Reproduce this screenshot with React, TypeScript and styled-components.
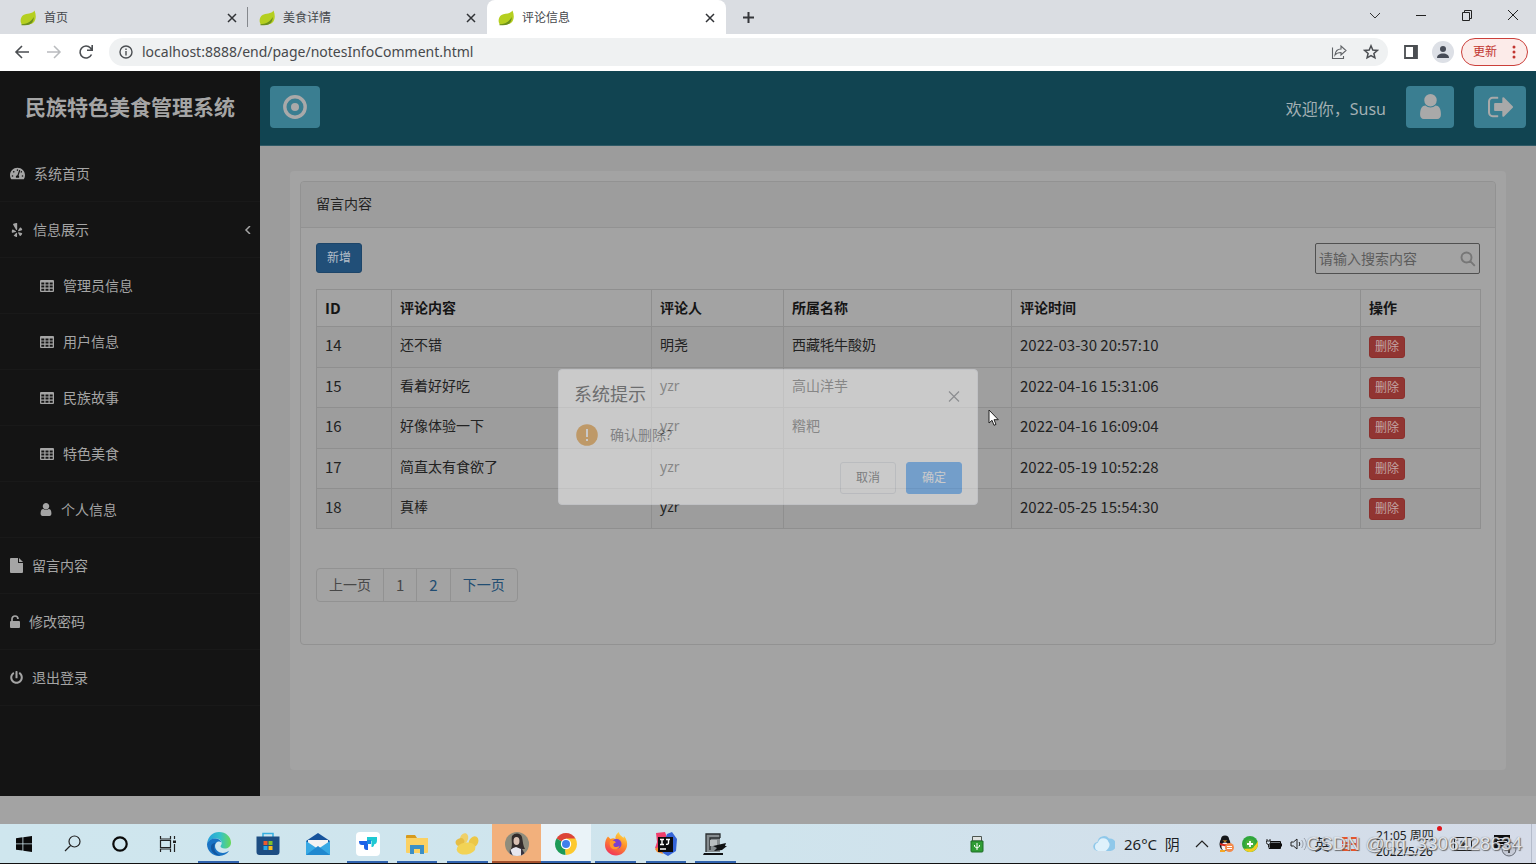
import React from 'react';
import styled, { createGlobalStyle, css } from 'styled-components';
import { FaTachometerAlt, FaYelp, FaPowerOff } from 'react-icons/fa';

const GlobalStyle = createGlobalStyle`
  *, *::before, *::after { box-sizing: border-box; }
  body {
    margin: 0;
    font-family: "Noto Sans", "Noto Sans CJK SC", sans-serif;
    font-size: 14px;
    line-height: 20px;
    color: #222;
    background: #a3a3a3;
  }
  button, input { font: inherit; color: inherit; margin: 0; }
  button { padding: 0; border: 0; background: none; cursor: default; }
  a { color: inherit; text-decoration: none; }
  svg { display: block; flex: none; }
`;

const Page = styled.div`
  display: flex;
  flex-direction: column;
  min-height: 100vh;
`;

/* ---------- browser chrome ---------- */

const TabStrip = styled.div`
  display: flex;
  height: 34px;
  padding-left: 9px;
  background: #dadde2;
`;

const Tab = styled.div<{ $active?: boolean; $divided?: boolean }>`
  display: flex;
  align-items: center;
  flex: 0 1 239px;
  padding: 1px 9px 0 11px;
  font-size: 12px;
  color: #45474b;
  ${p => p.$divided && css`
    background: linear-gradient(#85888d, #85888d) right center / 1px 20px no-repeat;
  `}
  ${p => p.$active && css`background: #fff; border-radius: 8px 8px 0 0;`}
`;

const TabTitle = styled.button`
  flex: 1;
  padding: 1px 0 0 8px;
  text-align: left;
`;

const SmallButton = styled.button<{ $w?: number }>`
  display: flex;
  align-items: center;
  justify-content: center;
  flex: none;
  width: ${p => p.$w ?? 16}px;
`;

const WindowButtons = styled.div`
  display: flex;
  margin-left: auto;
  padding-bottom: 4px;
`;

const AddressRow = styled.div`
  display: flex;
  align-items: center;
  height: 37px;
  padding: 0 8px 1px 6px;
  background: #fff;
`;

const UrlBar = styled.div`
  display: flex;
  align-items: center;
  flex: 1;
  height: 28px;
  margin: 0 7px;
  padding: 0 1px 0 10px;
  border-radius: 14px;
  background: #eff1f2;
`;

const UrlInput = styled.input`
  flex: 1;
  min-width: 0;
  padding: 0 0 0 9px;
  border: 0;
  outline: 0;
  background: none;
  color: #47494c;
`;

const Avatar = styled.span`
  display: flex;
  align-items: center;
  justify-content: center;
  width: 22px;
  height: 22px;
  border-radius: 50%;
  background: #dde0e6;
`;

const UpdateButton = styled.button`
  display: flex;
  align-items: center;
  justify-content: space-between;
  width: 67px;
  height: 28px;
  margin-left: 2px;
  padding: 0 11px;
  border: 1px solid #cb3f3a;
  border-radius: 14px;
  background: #fcebe9;
  color: #c13530;
  font-size: 12px;
`;

/* ---------- application ---------- */

const Viewport = styled.div`
  position: relative;
  display: flex;
  flex: 1;
  padding-bottom: 28px;
  background: #a3a3a3;
`;

const Sidebar = styled.aside`
  flex: 0 0 260px;
  background: #141414;
  color: #a5a5a5;
`;

const Brand = styled.h1`
  display: flex;
  align-items: center;
  justify-content: center;
  height: 75px;
  margin: 0;
  padding-bottom: 4px;
  font-size: 21px;
  font-weight: 700;
`;

const NavLink = styled.a<{ $nested?: boolean }>`
  display: flex;
  align-items: center;
  height: 56px;
  gap: 9px;
  padding: 0 8px 0 ${p => (p.$nested ? 40 : 10)}px;
  border-bottom: 1px solid #191919;
`;

const Push = styled.span`
  margin-left: auto;
`;

const Main = styled.div`
  display: flex;
  flex-direction: column;
  flex: 1;
  min-width: 0;
  background: #9c9c9c;
`;

const Header = styled.header`
  display: flex;
  align-items: center;
  height: 75px;
  gap: 20px;
  padding: 0 10px 3px;
  border-bottom: 1px solid #2f5a66;
  background: #114451;
`;

const HeaderButton = styled.button<{ $w: number }>`
  display: flex;
  align-items: center;
  justify-content: center;
  width: ${p => p.$w}px;
  height: 42px;
  border-radius: 4px;
  background: #3a7e91;
  color: #a9a9a9;
`;

const Welcome = styled.span`
  margin-left: auto;
  padding-top: 4px;
  font-size: 16px;
  color: #a3b0b4;
`;

const Sheet = styled.main`
  flex: 1;
  margin: 25px 30px 26px;
  padding: 10px;
  border-radius: 4px;
  background: #a3a3a3;
`;

const Panel = styled.section`
  border: 1px solid #929292;
  border-radius: 4px;
`;

const PanelTitle = styled.h2`
  margin: 0;
  padding: 12px 15px 13px;
  border-bottom: 1px solid #929292;
  border-radius: 4px 4px 0 0;
  background: #9d9d9d;
  font-size: 14px;
  font-weight: 400;
`;

const PanelBody = styled.div`
  padding: 15px 15px 42px;
`;

const Tools = styled.div`
  display: flex;
  align-items: flex-start;
  justify-content: space-between;
  margin-bottom: 15px;
`;

const ActionButton = styled.button<{ $kind: 'add' | 'delete' }>`
  display: block;
  border: 1px solid;
  border-radius: 3px;
  font-size: 12px;
  ${p => p.$kind === 'add'
    ? css`width: 46px; height: 30px; background: #214f78; border-color: #1d4569; color: #b4bec8;`
    : css`width: 36px; height: 22px; margin-top: 1px; line-height: 20px; background: #913532; border-color: #8b2f2c; color: #c3a5a4;`}
`;

const SearchBox = styled.label`
  display: flex;
  align-items: center;
  width: 165px;
  height: 31px;
  padding: 0 3px;
  border: 1px solid #505050;
  border-radius: 2px;
  color: #777;
`;

const SearchInput = styled.input`
  flex: 1;
  min-width: 0;
  padding: 0;
  border: 0;
  outline: 0;
  background: none;
  &::placeholder { color: #5c5c5c; opacity: 1; }
`;

const Table = styled.table`
  width: 100%;
  margin-bottom: 39px;
  border-collapse: collapse;
  table-layout: fixed;
  th, td {
    padding: 8px 8px 0;
    border: 1px solid #8f8f8f;
    text-align: left;
    vertical-align: top;
  }
  thead tr { height: 37px; }
  tbody tr { height: 40px; background: #9f9f9f; }
  tbody tr:nth-child(odd) { background: #9d9d9d; }
  tbody tr:nth-child(odd):not(:last-child) { height: 41px; }
  th { color: #151515; }
`;

const Latin = styled.span`
  font-family: "Noto Sans CJK SC", sans-serif;
  font-size: 15px;
`;

const Pager = styled.nav`
  display: inline-flex;
  border: 1px solid #929292;
  border-radius: 4px;
`;

const PageButton = styled.button<{ $link?: boolean }>`
  height: 32px;
  padding: 0 12px;
  color: ${p => (p.$link ? '#214d72' : '#484848')};
  & + & { border-left: 1px solid #929292; }
`;

/* ---------- message box ---------- */

const Overlay = styled.div`
  position: absolute;
  inset: 0;
  display: flex;
  align-items: center;
  justify-content: center;
  padding-bottom: 22px;
`;

const MessageBox = styled.div`
  width: 420px;
  padding-bottom: 10px;
  border: 1px solid #ebeef5;
  border-radius: 4px;
  background: #fff;
  opacity: 0.45;
`;

const BoxHeader = styled.div`
  display: flex;
  align-items: center;
  justify-content: space-between;
  padding: 15px 15px 10px;
  line-height: 18px;
  font-size: 18px;
  color: #303133;
`;

const BoxContent = styled.div`
  display: flex;
  align-items: center;
  gap: 12px;
  padding: 10px 15px;
  line-height: 24px;
  color: #606266;
`;

const BoxFooter = styled.div`
  display: flex;
  justify-content: flex-end;
  gap: 10px;
  padding: 5px 15px 0;
`;

const BoxButton = styled.button<{ $primary?: boolean }>`
  width: 56px;
  height: 32px;
  border: 1px solid ${p => (p.$primary ? '#409eff' : '#dcdfe6')};
  border-radius: 3px;
  background: ${p => (p.$primary ? '#409eff' : '#fff')};
  color: ${p => (p.$primary ? '#fff' : '#505256')};
  font-size: 12px;
`;

const Cursor = styled.svg`
  position: absolute;
  left: 988px;
  top: 338px;
`;

/* ---------- taskbar ---------- */

const Taskbar = styled.footer`
  position: relative;
  display: flex;
  height: 40px;
  border-bottom: 1px solid #111;
  background: linear-gradient(90deg, #cfe6ee 0%, #cfe4ed 50%, #d5dbe8 100%);
  color: #1c1f24;
`;

const TaskButton = styled.button<{ $w?: number }>`
  display: flex;
  align-items: center;
  justify-content: center;
  width: ${p => p.$w ?? 48}px;
`;

const Apps = styled.div`
  display: flex;
  flex: 0 1 546px;
  margin-left: 2px;
`;

const AppButton = styled.button<{ $tint?: string; $line?: string }>`
  display: flex;
  align-items: center;
  justify-content: center;
  flex: 1;
  background: ${p => p.$tint ?? 'none'};
  ${p => p.$line && css`
    background: linear-gradient(${p.$line}, ${p.$line}) bottom / ${p.$tint ? '100%' : '82%'} 2px no-repeat ${p.$tint ?? 'transparent'};
  `}
`;

const Tray = styled.div`
  display: flex;
  align-items: stretch;
  margin-left: auto;
`;

const Weather = styled.button`
  display: flex;
  align-items: center;
  gap: 9px;
  width: 97px;
  margin-left: 104px;
  font-size: 15px;
  white-space: pre;
`;

const Ime = styled.button`
  width: 24px;
  font-size: 15px;
`;

const Clock = styled.time`
  display: flex;
  flex-direction: column;
  justify-content: center;
  width: 81px;
  padding-left: 10px;
  font-size: 12px;
  line-height: 16px;
  white-space: nowrap;
`;

const ShowDesktop = styled.button`
  width: 5px;
  margin-left: 4px;
  border-left: 1px solid #b5bccb;
`;

const RedDot = styled.i`
  position: absolute;
  right: 94px;
  top: 2px;
  width: 5px;
  height: 5px;
  border-radius: 50%;
  background: #e0151b;
`;

const Watermark = styled.span`
  position: absolute;
  right: 14px;
  top: 9px;
  font-family: "Liberation Sans", sans-serif;
  font-size: 19px;
  line-height: 22px;
  color: #e4e6ea;
  text-shadow: 1px 1px 1px #555, 0 0 1px #777;
  opacity: 0.85;
`;

/* ---------- icons ---------- */

type StrokeProps = { size: number; d: string; w?: number; color?: string };
const Stroke = ({ size, d, w = 1, color = 'currentColor' }: StrokeProps) => (
  <svg width={size} height={size} viewBox={`0 0 ${size} ${size}`} fill="none" stroke={color} strokeWidth={w}>
    <path d={d} />
  </svg>
);

const Leaf = () => (
  <svg width="16" height="16" viewBox="0 0 16 16">
    <path d="M14.500 0.500c1.800 4.500 2 9.500-1.500 12.500C10 15.200 5 14.200 2 14.800-.2 12 .2 7 3.500 5 6.500 3.200 12.500 4.200 14.500.5z" fill="#b5cf20" />
    <path d="M1.500 14.200c5-.2 9.500-2 12.300-7.200C13.800 12 11 14.500 7.500 15c-2.500.3-4.500.4-6 .3z" fill="#6c8f1c" />
  </svg>
);

const UserGlyph = ({ size }: { size: number }) => (
  <svg width={Math.round(size * 0.9)} height={size} viewBox="0 128 1280 1536" fill="currentColor">
    <path d="M1280 1399q0 109-62.500 187t-150.500 78h-854q-88 0-150.500-78t-62.500-187q0-85 8.500-160.500t31.500-152 58.500-131 94-89 134.500-34.500q131 128 313 128t313-128q76 0 134.500 34.500t94 89 58.500 131 31.500 152 8.500 160.500zM1024 512q0 159-112.500 271.500t-271.500 112.500-271.500-112.500-112.500-271.500 112.500-271.500 271.500-112.500 271.500 112.500 112.500 271.500z" />
  </svg>
);

const SignOutGlyph = () => (
  <svg width="25" height="22" viewBox="0 256 1568 1280" fill="currentColor">
    <path d="M640 1440q0 4 1 20t.5 26.500-3 23.500-10 19.500-20.500 6.500h-320q-119 0-203.500-84.500t-84.500-203.500v-704q0-119 84.500-203.500t203.500-84.500h320q13 0 22.500 9.500t9.500 22.500q0 4 1 20t.5 26.500-3 23.500-10 19.500-20.500 6.500h-320q-66 0-113 47t-47 113v704q0 66 47 113t113 47h312l11.500 1 11.500 3 8 5.500 7 9 2 13.500zM1568 896q0 26-19 45l-544 544q-19 19-45 19t-45-19-19-45v-288h-448q-26 0-45-19t-19-45v-384q0-26 19-45t45-19h448v-288q0-26 19-45t45-19 45 19l544 544q19 19 19 45z" />
  </svg>
);

const TableGlyph = () => (
  <svg width="14" height="12" viewBox="0 0 14 12">
    <path fill="currentColor" fillRule="evenodd" d="M1 0h12a1 1 0 0 1 1 1v10a1 1 0 0 1-1 1H1a1 1 0 0 1-1-1V1a1 1 0 0 1 1-1zM1.300 2.500v2h3v-2zM5.500 2.500v2h3v-2zM9.700 2.500v2h3v-2zM1.300 5.500v2h3v-2zM5.500 5.500v2h3v-2zM9.700 5.500v2h3v-2zM1.300 8.700v2h3v-2zM5.500 8.700v2h3v-2zM9.700 8.700v2h3v-2z" />
  </svg>
);

const FileGlyph = () => (
  <svg width="13" height="15" viewBox="0 0 13 15">
    <path fill="currentColor" d="M1 0h7v4.500a.5.5 0 0 0 .5.5H13v9a1 1 0 0 1-1 1H1a1 1 0 0 1-1-1V1a1 1 0 0 1 1-1zM9 0l4 4H9z" />
  </svg>
);

const UnlockGlyph = () => (
  <svg width="10" height="13" viewBox="0 0 10 13">
    <path d="M2 7V4a3 3 0 0 1 6 0" fill="none" stroke="currentColor" strokeWidth="1.700" />
    <rect y="6" width="10" height="7" rx="1" fill="currentColor" />
  </svg>
);

const WindowsLogo = () => (
  <svg width="16" height="16" viewBox="0 0 16 16" fill="#0a0a0a">
    <path d="M0 2.200 6.500 1.300v6.200H0zM7.300 1.200 16 0v7.500H7.300zM0 8.300h6.500v6.300L0 13.700zM7.300 8.300H16V16l-8.700-1.300z" />
  </svg>
);

const TaskViewGlyph = () => (
  <svg width="18" height="16" viewBox="0 0 18 16" fill="none" stroke="#222" strokeWidth="1.200">
    <path d="M1.500 0v3h10V0M1.500 16v-3h10v3M1.500 4.500h10v7h-10zM15.500 0v3M15.500 8v8" />
    <path d="M14 4.500h3v2.500h-3z" fill="#222" stroke="none" />
  </svg>
);

const EdgeLogo = () => (
  <svg width="24" height="24" viewBox="0 0 24 24">
    <defs>
      <linearGradient id="edgeTop" x1="0" y1="0.500" x2="1" y2="0.500">
        <stop offset="0" stopColor="#249fdc" />
        <stop offset="0.550" stopColor="#35c1c9" />
        <stop offset="1" stopColor="#68d957" />
      </linearGradient>
    </defs>
    <path d="M0 12C1 4 6 0 12 0c7 0 12 5 12 10.500 0 4-3 6-6.300 6-2.700 0-4.200-1-4.200-2.200 0-.9 1.200-1.300 1.200-3.300C14.700 8.500 12 6.500 9 6.500 4 6.500 1 9 0 12z" fill="url(#edgeTop)" />
    <path d="M0 12c1-3.500 4.500-5.500 8.500-5.500 3 0 5.500 1.800 6 4-1-1-2.500-1.300-4-.7-4 2-3 9 2.500 10.700 3.500 1 6.800 0 9.200-1.700C20 22 16.500 24 12 24 5.400 24 0 18.600 0 12z" fill="#1973c4" />
    <path d="M8.500 10.800C5.500 14 7 21.500 13.500 23.500 8 24 3.500 19.500 4 14.500c.2-2 2-3.500 4.500-3.700z" fill="#1257a0" />
  </svg>
);

const StoreLogo = () => (
  <svg width="24" height="24" viewBox="0 0 24 24">
    <path d="M7 5.500V1.500h10v4" fill="none" stroke="#35aee0" strokeWidth="1.500" />
    <path d="M.5 4.500h23V20a3 3 0 0 1-3 3h-17a3 3 0 0 1-3-3z" fill="#1d4d82" />
    <path d="M7.500 9h4v4h-4z" fill="#ee5a2c" /><path d="M12.500 9h4v4h-4z" fill="#7fc02a" />
    <path d="M7.500 14h4v4h-4z" fill="#28a8ea" /><path d="M12.500 14h4v4h-4z" fill="#fcbd1c" />
  </svg>
);

const MailLogo = () => (
  <svg width="26" height="24" viewBox="0 0 26 24">
    <path d="M1 9 13 1l12 8v3H1z" fill="#17539b" />
    <path d="M3 8h20v8H3z" fill="#f3f3f3" />
    <path d="M1 9l12 8 12-8v14H1z" fill="#38a9e4" />
    <path d="M1 23 13 14l12 9z" fill="#2088cf" />
  </svg>
);

const MeetLogo = () => (
  <svg width="24" height="24" viewBox="0 0 24 24">
    <rect width="24" height="24" rx="4" fill="#fff" />
    <path d="M3 9h9v9c-3 .5-4-1-4-3v-2H6c-2 0-3-1-3-4z" fill="#1c62e8" />
    <path d="M11 5h10v3c0 3-1 4-3 4.500V13c0 1.500-1 2-2.500 2V9H11z" fill="#1fc9d3" />
    <path d="M11 8h4v4h-4z" fill="#1689e4" />
  </svg>
);

const FolderLogo = () => (
  <svg width="24" height="22" viewBox="0 0 24 22">
    <path d="M1 3a1 1 0 0 1 1-1h8l2 3H1z" fill="#d79a1d" />
    <path d="M1 5h22v14a1 1 0 0 1-1 1H2a1 1 0 0 1-1-1z" fill="#fbd163" />
    <path d="M5 12h14v9h-4v-5H9v5H5z" fill="#3c8fc6" />
  </svg>
);

const BeansLogo = () => (
  <svg width="26" height="24" viewBox="0 0 26 24">
    <ellipse cx="10" cy="6.500" rx="5.500" ry="4" transform="rotate(-70 10 6.500)" fill="#efd069" />
    <ellipse cx="6" cy="10" rx="4.500" ry="3.500" transform="rotate(-25 6 10)" fill="#e6bd45" />
    <ellipse cx="19.500" cy="10" rx="6" ry="4.500" transform="rotate(-60 19.500 10)" fill="#ecc746" />
    <ellipse cx="12" cy="16.500" rx="9.500" ry="6" transform="rotate(-8 12 16.500)" fill="#f2d355" />
  </svg>
);

const PortraitLogo = () => (
  <svg width="24" height="24" viewBox="0 0 24 24">
    <clipPath id="portraitClip"><circle cx="12" cy="12" r="12" /></clipPath>
    <g clipPath="url(#portraitClip)">
      <path d="M0 0h24v24H0z" fill="#8f8c7c" />
      <path d="M7 4c3-4 9-3 10 1 1 5 1 9 3 12H6C8 13 6 8 7 4z" fill="#332c2b" />
      <ellipse cx="11.500" cy="9" rx="3" ry="4" fill="#d9c0b2" />
      <path d="M4 24c0-6 3-8 7-9l5 2c2 1 3 4 3 7z" fill="#e6e6ee" />
      <path d="M16 15l5 9h-5zM5 17l3 7H4z" fill="#37343f" />
    </g>
  </svg>
);

const ChromeLogo = () => (
  <svg width="22" height="22" viewBox="0 0 22 22">
    <path d="M11 11 1.500 5.500A11 11 0 0 1 20.500 5.500z" fill="#dc4437" />
    <path d="M11 11V5.500h9.500A11 11 0 0 1 11 22z" fill="#fdc92f" />
    <path d="M11 11 10.500 22A11 11 0 0 1 1.500 5.500z" fill="#1c9a56" />
    <path d="M15.300 13.500 11 22l-1-5z" fill="#fdc92f" />
    <circle cx="11" cy="11" r="5.200" fill="#fff" />
    <circle cx="11" cy="11" r="4" fill="#3f80ec" />
  </svg>
);

const FirefoxLogo = () => (
  <svg width="24" height="24" viewBox="0 0 24 24">
    <defs>
      <linearGradient id="foxFire" x1="0.800" y1="0" x2="0.300" y2="1">
        <stop offset="0" stopColor="#ffe04a" />
        <stop offset="0.450" stopColor="#ff9027" />
        <stop offset="1" stopColor="#f0315c" />
      </linearGradient>
    </defs>
    <path d="M4 4.500 6.500 7c1.500-.8 4-1 5 0C11 3.500 13.500 1 15 0c0 3 3 4 4.500 6L20 4c3 3.500 3.500 7 3 10-1 5.500-5.500 9.500-11 9.500S1 19 1 13c0-3.500 1-6.500 3-8.500z" fill="url(#foxFire)" />
    <circle cx="12.500" cy="12" r="5" fill="#7a40cf" />
    <path d="M6 9c3-1 5 0 6 1.500-2 .5-3 1.500-2.500 3 .5 2 4 2 6 .5-1 4-7 4.500-9 1C5.500 13 5.500 11 6 9z" fill="#ff9a2a" />
  </svg>
);

const IdeaLogo = () => (
  <svg width="24" height="24" viewBox="0 0 24 24">
    <path d="M2 1l9-1 3 8-8 12-5-4 2-6z" fill="#ef3f6d" />
    <path d="M13 2l5-2 5 7-1 12-8 5-7-4z" fill="#3464d8" />
    <path d="M1 17l5-3 3 8-6-2z" fill="#f58a2c" />
    <path d="M4 5h15v15H4z" fill="#0b0b0e" />
    <path d="M6 7.500h4M8 7.500v5M6 12.500h4M12 7.500h4M14.500 7.500v3.500c0 1.200-1 1.500-2.500 1.300M6 17h6" stroke="#fff" strokeWidth="1.400" fill="none" />
  </svg>
);

const RecorderLogo = () => (
  <svg width="26" height="24" viewBox="0 0 26 24">
    <path d="M4 2h14v18H4z" fill="#868c8f" />
    <path d="M18 6V2H4v18M18 6H8v12M9 11h6" fill="none" stroke="#2a2e30" strokeWidth="1.300" />
    <path d="M8 8h7v6H8z" fill="#b9bec0" />
    <path d="M11 14l13-3-1 3h2l-5 4-8 1 3-3zM2 21h19v2H1z" fill="#101214" />
  </svg>
);

const UsbGlyph = () => (
  <svg width="14" height="18" viewBox="0 0 14 18">
    <path d="M2.500 1.500h9V6h-9z" fill="#dfe3e0" stroke="#4d5650" />
    <path d="M1 6h12v10a1 1 0 0 1-1 1H2a1 1 0 0 1-1-1z" fill="#2f9c34" stroke="#1f6c27" />
    <path d="M7 8v7M4.500 10v1.500L7 13l2.500-1.500V10" stroke="#fff" fill="none" />
  </svg>
);

const CloudGlyph = () => (
  <svg width="22" height="16" viewBox="0 0 22 16">
    <path d="M5 15a4.500 4.500 0 0 1-.5-9A6.500 6.500 0 0 1 16 2.500 6 6 0 0 1 17.500 15z" fill="#8fc8ea" />
    <path d="M5 15a4.500 4.500 0 0 1 0-8.500A5.500 5.500 0 0 1 15.500 6c3 3-1 8-3 9z" fill="#dff1fb" />
  </svg>
);

const QqGlyph = () => (
  <svg width="16" height="17" viewBox="0 0 16 17">
    <ellipse cx="7" cy="9" rx="5.500" ry="7" fill="#14161a" />
    <circle cx="7" cy="4.500" r="4" fill="#14161a" />
    <ellipse cx="7" cy="11.500" rx="3.500" ry="4" fill="#f3f3f3" />
    <path d="M2 8c3 1.500 7 1.500 10 0v2c-3 1.500-7 1.500-10 0z" fill="#d8261f" />
    <path d="M4.500 5.500h5L7 7zM2 15h5v2H2z" fill="#f5a623" />
    <circle cx="11.500" cy="12.500" r="4.500" fill="#f28a4c" />
    <path d="M9 11.500h5M9 13.500h5" stroke="#fff" />
  </svg>
);

const GuardGlyph = () => (
  <svg width="16" height="16" viewBox="0 0 16 16">
    <circle cx="8" cy="8" r="8" fill="#30a63c" />
    <path d="M1.500 12.500A8 8 0 0 0 15.500 5c-1 5-7 8.500-14 7.500z" fill="#f1ce20" />
    <circle cx="8" cy="8" r="4.800" fill="#49b13a" />
    <path d="M8 5v6M5 8h6" stroke="#fff" strokeWidth="1.800" />
  </svg>
);

const BatteryGlyph = () => (
  <svg width="16" height="12" viewBox="0 0 16 12">
    <path d="M5 3.500h9.500v7H3V7" fill="none" stroke="#0d0d0d" />
    <path d="M4 4.500h10v5.500H4zM15 5.500h1v3h-1z" fill="#0d0d0d" />
    <path d="M1 1v2M4 1v2M.5 3h4v1.500a2 2 0 0 1-4 0zM2.500 6v3" fill="none" stroke="#222" />
  </svg>
);

const VolumeGlyph = () => (
  <svg width="17" height="14" viewBox="0 0 17 14" fill="none" stroke="#222">
    <path d="M1 5h2.500L7 2v10L3.500 9H1zM9 5c1 1.200 1 2.800 0 4" />
    <path d="M11.500 3c2 2.300 2 5.700 0 8M14 1c3 3.500 3 8.500 0 12" stroke="#9aa0ab" />
  </svg>
);

const SogouGlyph = () => (
  <svg width="16" height="16" viewBox="0 0 16 16" fill="none" stroke="#e8552b" strokeWidth="2">
    <path d="M1 2h6v5H1zM1 10h6v4H1zM9 2h6v12H9M9 8h6" />
  </svg>
);

const PlayBoxGlyph = () => (
  <svg width="18" height="14" viewBox="0 0 18 14" fill="none" stroke="#222">
    <path d="M.5.5h17v13H.5z" /><path d="M7 4l5 3-5 3z" fill="#222" />
  </svg>
);

const NoticeGlyph = () => (
  <svg width="28" height="26" viewBox="0 0 28 26">
    <path d="M5 4h16v13H5z" fill="#0e0e10" />
    <path d="M8 7.500h10M8 10.500h10M8 13.500h7" stroke="#d5dbe8" />
    <circle cx="20" cy="18" r="7" fill="#c5cad6" stroke="#666b75" />
    <path d="M18 16l2-1.500V22" fill="none" stroke="#222" strokeWidth="1.500" />
  </svg>
);

/* ---------- data ---------- */

const nav = [
  { label: '系统首页', icon: <FaTachometerAlt size={15} /> },
  { label: '信息展示', icon: <FaYelp size={14} />, open: true },
  { label: '管理员信息', icon: <TableGlyph />, nested: true },
  { label: '用户信息', icon: <TableGlyph />, nested: true },
  { label: '民族故事', icon: <TableGlyph />, nested: true },
  { label: '特色美食', icon: <TableGlyph />, nested: true },
  { label: '个人信息', icon: <UserGlyph size={13} />, nested: true },
  { label: '留言内容', icon: <FileGlyph /> },
  { label: '修改密码', icon: <UnlockGlyph /> },
  { label: '退出登录', icon: <FaPowerOff size={13} /> },
];

const columns = [
  { title: 'ID', width: 75 },
  { title: '评论内容', width: 260 },
  { title: '评论人', width: 132 },
  { title: '所属名称', width: 228 },
  { title: '评论时间', width: 349 },
  { title: '操作', width: 120 },
];

const comments = [
  { id: 14, text: '还不错', by: '明尧', of: '西藏牦牛酸奶', at: '2022-03-30 20:57:10' },
  { id: 15, text: '看着好好吃', by: 'yzr', of: '高山洋芋', at: '2022-04-16 15:31:06' },
  { id: 16, text: '好像体验一下', by: 'yzr', of: '糌粑', at: '2022-04-16 16:09:04' },
  { id: 17, text: '简直太有食欲了', by: 'yzr', of: '', at: '2022-05-19 10:52:28' },
  { id: 18, text: '真棒', by: 'yzr', of: '', at: '2022-05-25 15:54:30' },
];

const line = '#2f62ae';
const apps = [
  { name: 'Edge', icon: <EdgeLogo />, line },
  { name: 'Store', icon: <StoreLogo /> },
  { name: 'Mail', icon: <MailLogo /> },
  { name: 'Meeting', icon: <MeetLogo />, line },
  { name: 'Explorer', icon: <FolderLogo />, line },
  { name: 'Beans', icon: <BeansLogo />, line },
  { name: 'Chat', icon: <PortraitLogo />, tint: '#f2b07c', line: '#a3502c' },
  { name: 'Chrome', icon: <ChromeLogo />, tint: '#eaf3f8', line },
  { name: 'Firefox', icon: <FirefoxLogo />, line },
  { name: 'IDEA', icon: <IdeaLogo />, line },
  { name: 'Recorder', icon: <RecorderLogo />, line },
];

const crossPath = 'M1 1l8 8M9 1l-8 8';

function BrowserChrome() {
  return (
    <>
      <TabStrip>
        {['首页', '美食详情', '评论信息'].map((title, i) => (
          <Tab key={title} $divided={i === 0} $active={i === 2}>
            <Leaf />
            <TabTitle>{title}</TabTitle>
            <SmallButton aria-label="关闭标签页" $w={14}><Stroke size={10} d={crossPath} w={1.5} color="#303236" /></SmallButton>
          </Tab>
        ))}
        <SmallButton aria-label="新标签页" $w={44}><Stroke size={13} d="M6.500 1v11M1 6.500h11" w={2} color="#35373b" /></SmallButton>
        <WindowButtons>
          <SmallButton aria-label="搜索标签页" $w={46}><Stroke size={12} d="M1 4l5 5 5-5" color="#333" /></SmallButton>
          <SmallButton aria-label="最小化" $w={46}><Stroke size={12} d="M1 6.500h10" color="#222" /></SmallButton>
          <SmallButton aria-label="还原" $w={46}><Stroke size={12} d="M1.500 3.500h7v8h-7zM3.500 3V1.500h7v8H9" color="#222" /></SmallButton>
          <SmallButton aria-label="关闭" $w={46}><Stroke size={12} d="M1 1l10 10M11 1L1 11" color="#222" /></SmallButton>
        </WindowButtons>
      </TabStrip>
      <AddressRow>
        <SmallButton aria-label="后退" $w={32}><Stroke size={16} d="M15 8H2M8 2L2 8l6 6" w={1.6} color="#4b4e52" /></SmallButton>
        <SmallButton aria-label="前进" $w={32}><Stroke size={16} d="M1 8h13M8 2l6 6-6 6" w={1.5} color="#b9bbbe" /></SmallButton>
        <SmallButton aria-label="刷新" $w={32}><Stroke size={16} d="M13.500 10.500A6 6 0 1 1 12.500 4L14 6M14.200 1v5.200H9" w={1.6} color="#4b4e52" /></SmallButton>
        <UrlBar>
          <svg width="14" height="14" viewBox="0 0 14 14" fill="none" stroke="#4b4e52" strokeWidth="1.400">
            <circle cx="7" cy="7" r="6" /><path d="M7 6v4.500M7 3.500V5" />
          </svg>
          <UrlInput aria-label="地址" defaultValue="localhost:8888/end/page/notesInfoComment.html" />
          <SmallButton aria-label="分享" $w={32}>
            <Stroke size={16} d="M1.500 3.500v11h11V12M4 11C4.500 7 7 5 10 5V2l5 4.500-5 4.500V8.500C7.500 8.500 5.500 9 4 11z" w={1.1} color="#606367" />
          </SmallButton>
          <SmallButton aria-label="收藏" $w={32}>
            <Stroke size={16} d="M8 1.800l1.800 4.200 4.500.4-3.400 3 1 4.400L8 11.500l-3.900 2.300 1-4.400-3.400-3 4.500-.4z" w={1.5} color="#4b4e52" />
          </SmallButton>
        </UrlBar>
        <SmallButton aria-label="侧边栏" $w={32}>
          <svg width="14" height="14" viewBox="0 0 14 14"><path d="M1 1h12v12H1z" fill="none" stroke="#4b4e52" strokeWidth="1.800" /><path d="M9 1h4v12H9z" fill="#4b4e52" /></svg>
        </SmallButton>
        <SmallButton aria-label="用户" $w={32}>
          <Avatar>
            <svg width="14" height="14" viewBox="0 0 14 14" fill="#474c57"><circle cx="7" cy="4" r="3" /><path d="M1 13c0-3 2.500-4.500 6-4.500s6 1.500 6 4.500z" /></svg>
          </Avatar>
        </SmallButton>
        <UpdateButton>
          更新
          <svg width="4" height="14" viewBox="0 0 4 14" fill="#c13530"><circle cx="2" cy="2" r="1.500" /><circle cx="2" cy="7" r="1.500" /><circle cx="2" cy="12" r="1.500" /></svg>
        </UpdateButton>
      </AddressRow>
    </>
  );
}

function CommentPanel() {
  return (
    <Panel>
      <PanelTitle>留言内容</PanelTitle>
      <PanelBody>
        <Tools>
          <ActionButton $kind="add">新增</ActionButton>
          <SearchBox>
            <SearchInput aria-label="搜索" placeholder="请输入搜索内容" />
            <Stroke size={16} d="M11.500 6.500a5 5 0 1 1-10 0 5 5 0 1 1 10 0M10.200 10.200l4.600 4.600" w={1.9} />
          </SearchBox>
        </Tools>
        <Table>
          <colgroup>{columns.map(c => <col key={c.title} style={{ width: c.width }} />)}</colgroup>
          <thead>
            <tr>{columns.map(c => <th key={c.title} scope="col">{c.title === 'ID' ? <Latin>ID</Latin> : c.title}</th>)}</tr>
          </thead>
          <tbody>
            {comments.map(c => (
              <tr key={c.id}>
                <td><Latin>{c.id}</Latin></td>
                <td>{c.text}</td>
                <td>{c.by}</td>
                <td>{c.of}</td>
                <td><Latin>{c.at}</Latin></td>
                <td><ActionButton $kind="delete">删除</ActionButton></td>
              </tr>
            ))}
          </tbody>
        </Table>
        <Pager aria-label="分页">
          <PageButton>上一页</PageButton>
          <PageButton><Latin>1</Latin></PageButton>
          <PageButton $link><Latin>2</Latin></PageButton>
          <PageButton $link>下一页</PageButton>
        </Pager>
      </PanelBody>
    </Panel>
  );
}

function ConfirmBox() {
  return (
    <Overlay>
      <MessageBox role="dialog" aria-label="系统提示">
        <BoxHeader>
          系统提示
          <SmallButton aria-label="关闭"><Stroke size={16} d="M3 5.500l10 10M13 5.500l-10 10" w={1.2} color="#777a80" /></SmallButton>
        </BoxHeader>
        <BoxContent>
          <svg width="24" height="24" viewBox="0 0 24 24">
            <circle cx="13" cy="12" r="10.800" fill="#e8952a" />
            <path d="M13 6v8M13 16v2" stroke="#fff" strokeWidth="2" />
          </svg>
          确认删除?
        </BoxContent>
        <BoxFooter>
          <BoxButton>取消</BoxButton>
          <BoxButton $primary>确定</BoxButton>
        </BoxFooter>
      </MessageBox>
    </Overlay>
  );
}

function TaskbarView() {
  return (
    <Taskbar>
      <TaskButton aria-label="开始"><WindowsLogo /></TaskButton>
      <TaskButton aria-label="搜索"><Stroke size={17} d="M16 6.500a5.500 5.500 0 1 1-11 0 5.500 5.500 0 1 1 11 0M6.500 10.500L1 16" w={1.2} color="#222" /></TaskButton>
      <TaskButton aria-label="Cortana"><svg width="16" height="16" viewBox="0 0 16 16"><circle cx="8" cy="8" r="6.700" fill="none" stroke="#0a0a0a" strokeWidth="2.200" /></svg></TaskButton>
      <TaskButton aria-label="任务视图"><TaskViewGlyph /></TaskButton>
      <Apps>
        {apps.map(a => <AppButton key={a.name} aria-label={a.name} $tint={a.tint} $line={a.line}>{a.icon}</AppButton>)}
      </Apps>
      <Tray>
        <TaskButton aria-label="USB" $w={24}><UsbGlyph /></TaskButton>
        <Weather><CloudGlyph />{'26°C  阴'}</Weather>
        <TaskButton aria-label="更多图标" $w={24}><Stroke size={14} d="M1 10l6-6 6 6" w={1.2} color="#222" /></TaskButton>
        <TaskButton aria-label="QQ" $w={24}><QqGlyph /></TaskButton>
        <TaskButton aria-label="安全卫士" $w={24}><GuardGlyph /></TaskButton>
        <TaskButton aria-label="电池" $w={24}><BatteryGlyph /></TaskButton>
        <TaskButton aria-label="音量" $w={24}><VolumeGlyph /></TaskButton>
        <Ime>英</Ime>
        <TaskButton aria-label="输入法" $w={32}><SogouGlyph /></TaskButton>
        <Clock><span>21:05 周四</span><span>2022/5/26</span></Clock>
        <TaskButton aria-label="播放" $w={32}><PlayBoxGlyph /></TaskButton>
        <TaskButton aria-label="通知" $w={48}><NoticeGlyph /></TaskButton>
        <ShowDesktop aria-label="显示桌面" />
      </Tray>
      <RedDot />
      <Watermark>CSDN @qq_3306428634</Watermark>
    </Taskbar>
  );
}

export default function App() {
  return (
    <Page>
      <GlobalStyle />
      <BrowserChrome />
      <Viewport>
        <Sidebar>
          <Brand>民族特色美食管理系统</Brand>
          <nav>
            {nav.map(n => (
              <NavLink key={n.label} href="#" $nested={n.nested}>
                {n.icon}
                {n.label}
                {n.open && <Push><Stroke size={8} d="M6 0L2 4l4 4" w={1.5} /></Push>}
              </NavLink>
            ))}
          </nav>
        </Sidebar>
        <Main>
          <Header>
            <HeaderButton $w={50} aria-label="折叠菜单">
              <svg width="24" height="24" viewBox="0 0 24 24"><circle cx="12" cy="12" r="10.200" fill="none" stroke="currentColor" strokeWidth="3.400" /><circle cx="12" cy="12" r="4" fill="currentColor" /></svg>
            </HeaderButton>
            <Welcome>欢迎你，Susu</Welcome>
            <HeaderButton $w={48} aria-label="个人信息"><UserGlyph size={25} /></HeaderButton>
            <HeaderButton $w={52} aria-label="退出登录"><SignOutGlyph /></HeaderButton>
          </Header>
          <Sheet><CommentPanel /></Sheet>
        </Main>
        <ConfirmBox />
        <Cursor width="12" height="18" viewBox="0 0 12 18">
          <path d="M1 1v13l3-2.700 2 5 2-.9-2-4.700h4.300z" fill="#fff" stroke="#222" />
        </Cursor>
      </Viewport>
      <TaskbarView />
    </Page>
  );
}
